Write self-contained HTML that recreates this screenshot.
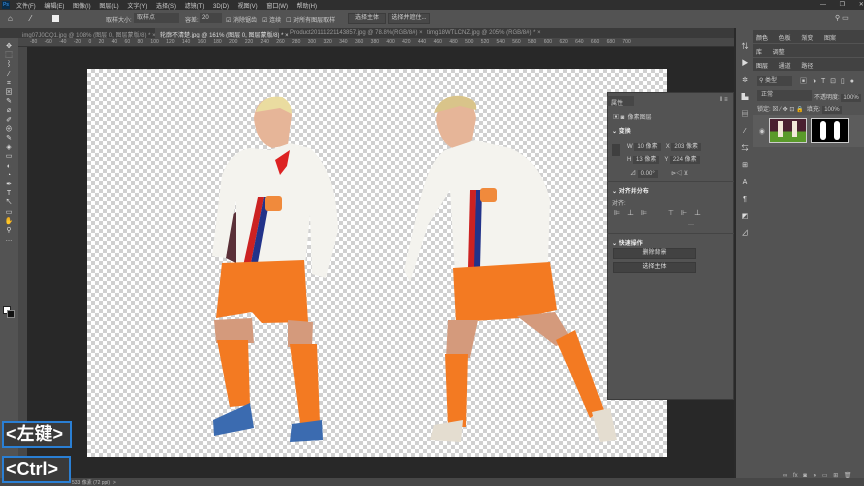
<!DOCTYPE html>
<html><head><meta charset="utf-8"><style>
*{margin:0;padding:0;box-sizing:border-box}
body{width:864px;height:486px;overflow:hidden;background:#282828;font-family:"Liberation Sans","Noto Sans CJK SC",sans-serif;font-size:6px;color:#ccc;position:relative}
.a{position:absolute}
.chk{background-color:#fff;background-image:conic-gradient(#d0d0d0 25%,#fff 0 50%,#d0d0d0 0 75%,#fff 0);background-size:8px 8px}
.key{position:absolute;left:2px;border:2px solid #2a7fd4;background:#3a3a3a;color:#fff;font-size:18px;font-weight:bold;padding:0 2px;line-height:22px}
.btn{position:absolute;background:#424242;border:1px solid #3a3a3a;color:#ddd;text-align:center;line-height:9px}
</style></head><body>
<div class="a" style="left:0;top:0;width:864px;height:10px;background:#2f2f2f"></div>
<div class="a" style="left:2px;top:1px;width:8px;height:8px;background:#0a2d4a;color:#3fa0ff;font-size:5px;line-height:8px;text-align:center">Ps</div>
<div class="a" style="left:16px;top:1px;color:#ccc;word-spacing:7px">文件(F) 编辑(E) 图像(I) 图层(L) 文字(Y) 选择(S) 滤镜(T) 3D(D) 视图(V) 窗口(W) 帮助(H)</div>
<div class="a" style="left:820px;top:1px;color:#ccc;word-spacing:12px">— ❐ ✕</div>
<div class="a" style="left:0;top:10px;width:864px;height:18px;background:#535353"></div>
<div class="a" style="left:8px;top:14px;color:#ddd;font-size:8px">⌂</div>
<div class="a" style="left:30px;top:14px;color:#ddd;font-size:8px">⁄</div>
<div class="a" style="left:52px;top:15px;width:7px;height:7px;background:#eee"></div>
<div class="a" style="left:106px;top:15px;">取样大小:</div>
<div class="a" style="left:134px;top:13px;width:45px;height:10px;background:#454545;padding-left:3px;line-height:10px">取样点</div>
<div class="a" style="left:185px;top:15px;">容差:</div>
<div class="a" style="left:200px;top:13px;width:22px;height:10px;background:#454545;padding-left:2px;line-height:10px">20</div>
<div class="a" style="left:226px;top:15px;">☑ 消除锯齿 &nbsp; ☑ 连续 &nbsp; ☐ 对所有图层取样</div>
<div class="a" style="left:348px;top:13px;width:38px;height:11px;background:#484848;border:1px solid #3c3c3c;text-align:center;line-height:9px">选择主体</div>
<div class="a" style="left:388px;top:13px;width:42px;height:11px;background:#484848;border:1px solid #3c3c3c;text-align:center;line-height:9px">选择并遮住...</div>
<div class="a" style="left:835px;top:14px;font-size:7px">⚲ ▭</div>
<div class="a" style="left:0;top:28px;width:736px;height:10px;background:#3a3a3a"></div>
<div class="a" style="left:22px;top:30px;color:#999">img07J0CQ1.jpg @ 108% (图层 0, 图层蒙版/8) * ×</div>
<div class="a" style="left:155px;top:28px;width:124px;height:10px;background:#4a4a4a"></div>
<div class="a" style="left:160px;top:30px;color:#ddd">轮廓不清楚.jpg @ 161% (图层 0, 图层蒙版/8) * ×</div>
<div class="a" style="left:290px;top:30px;color:#999">Product20111221143857.jpg @ 78.8%(RGB/8#) ×</div>
<div class="a" style="left:427px;top:30px;color:#999">timg18WTLCNZ.jpg @ 205% (RGB/8#) * ×</div>
<div class="a" style="left:18px;top:38px;width:718px;height:9px;background:#484848;border-bottom:1px solid #333"></div>
<div class="a" style="left:30px;top:39px;color:#aaa;font-size:5px;word-spacing:6px">-80 -60 -40 -20 0 20 40 60 80 100 120 140 160 180 200 220 240 260 280 300 320 340 360 380 400 420 440 460 480 500 520 540 560 580 600 620 640 660 680 700</div>
<div class="a" style="left:18px;top:47px;width:9px;height:431px;background:#484848"></div>
<div class="a" style="left:0;top:38px;width:18px;height:440px;background:#535353"></div>
<div class="a" style="left:4px;top:42px;color:#ddd;font-size:7px;line-height:9.2px;width:10px;text-align:center">✥<br>⬚<br>⌇<br>⁄<br>⌗<br>⊠<br>✎<br>⌀<br>✐<br>⊕<br>✎<br>◈<br>▭<br>◐<br>◔<br>✒<br>T<br>↖<br>▭<br>✋<br>⚲<br>…</div>
<div class="a" style="left:3px;top:306px;width:8px;height:8px;background:#fff;border:1px solid #222"></div>
<div class="a" style="left:7px;top:310px;width:8px;height:8px;background:#111;border:1px solid #888"></div>
<div class="a chk" style="left:87px;top:69px;width:580px;height:388px"></div>
<svg class="a" style="left:0;top:0" width="864" height="486">
 <!-- player1 -->
 <path d="M232 215 L245 205 L240 265 L226 258Z" fill="#5a3038"/>
 <path d="M272 97 Q256 100 254 118 Q256 142 272 148 L288 145 L292 115 Q290 98 272 97Z" fill="#e6b598"/>
 <path d="M256 112 Q262 94 282 97 Q292 102 292 114 L280 108 Z" fill="#eadca0"/>
 <path d="M250 148 Q232 150 222 175 L212 256 L226 258 L236 200 L236 268 L305 265 L310 215 L312 274 L326 278 L338 230 Q336 170 310 148 L290 143 L270 150Z" fill="#f4f3ee"/>
 <path d="M275 160 L290 150 L287 166 L280 175 Z" fill="#d22"/>
 <path d="M258 197 L264 197 L250 268 L243 266Z" fill="#c22"/>
 <path d="M264 197 L270 197 L257 268 L250 268Z" fill="#22338a"/>
 <rect x="265" y="196" width="17" height="15" rx="3" fill="#f08a3c"/>
 <path d="M222 263 L304 260 L308 322 L262 323 L252 312 L216 318Z" fill="#f37a22"/>
 <path d="M214 320 L252 318 L254 343 L216 343Z" fill="#d49a7c"/>
 <path d="M217 340 L248 340 L250 405 L230 407Z" fill="#f37a22"/>
 <path d="M288 320 L313 322 L312 347 L288 347Z" fill="#d49a7c"/>
 <path d="M290 344 L317 344 L320 423 L300 423Z" fill="#f37a22"/>
 <path d="M213 420 L250 403 L254 428 L214 436Z" fill="#3b6bb0"/>
 <path d="M292 424 L322 420 L323 440 L290 442Z" fill="#3b6bb0"/>
 <!-- player2 -->
 <path d="M455 98 Q438 100 436 120 Q440 146 458 150 L472 140 L476 118 Q474 100 455 98Z" fill="#e6b598"/>
 <path d="M434 113 Q440 94 462 96 Q478 99 476 110 L460 106Z" fill="#d9c48a"/>
 <path d="M445 150 Q430 160 420 200 L404 270 L410 282 L428 225 L450 190 L455 273 L533 268 L530 225 L532 265 L548 262 L550 200 Q540 160 510 148 L475 140Z" fill="#f4f3ee"/>
 <path d="M470 190 L476 190 L475 268 L468 268Z" fill="#c22"/>
 <path d="M476 190 L482 190 L480 268 L474 268Z" fill="#22338a"/>
 <rect x="480" y="188" width="17" height="14" rx="3" fill="#f08a3c"/>
 <path d="M453 268 L550 262 L557 310 L520 318 L456 322Z" fill="#f37a22"/>
 <path d="M448 320 L478 320 L470 358 L446 358Z" fill="#d49a7c"/>
 <path d="M445 354 L468 354 L466 427 L448 427Z" fill="#f37a22"/>
 <path d="M517 316 L555 312 L572 340 L556 346Z" fill="#d49a7c"/>
 <path d="M556 340 L575 330 L604 410 L590 418Z" fill="#f37a22"/>
 <path d="M434 425 L463 420 L461 442 L430 440Z" fill="#e4ddd0"/>
 <path d="M592 412 L610 408 L617 440 L600 442Z" fill="#e4ddd0"/>
</svg>
<div class="a" style="left:607px;top:92px;width:127px;height:308px;background:#535353;border:1px solid #3a3a3a"></div>
<div class="a" style="left:607px;top:96px;width:27px;height:10px;background:#464646;padding:2px 4px">属性</div>
<div class="a" style="left:720px;top:97px">‖ ≡</div>
<div class="a" style="left:613px;top:112px">▣ ◙ &nbsp;像素图层</div>
<div class="a" style="left:612px;top:126px;color:#eee;font-weight:bold">⌄ 变换</div>
<div class="a" style="left:612px;top:144px;width:8px;height:12px;background:#3f3f3f"></div>
<div class="a" style="left:627px;top:141px">W <span style="background:#454545;padding:1px 3px">10 像素</span> &nbsp;&nbsp;X <span style="background:#454545;padding:1px 3px">203 像素</span></div>
<div class="a" style="left:627px;top:154px">H <span style="background:#454545;padding:1px 3px">13 像素</span> &nbsp;&nbsp;Y <span style="background:#454545;padding:1px 3px">224 像素</span></div>
<div class="a" style="left:630px;top:168px">⊿ <span style="background:#454545;padding:1px 3px">0.00°</span> &nbsp;&nbsp;&nbsp;&nbsp;&nbsp;&nbsp;&nbsp;⊳◁ ⊻</div>
<div class="a" style="left:607px;top:181px;width:127px;height:1px;background:#444"></div>
<div class="a" style="left:612px;top:186px;color:#eee;font-weight:bold">⌄ 对齐并分布</div>
<div class="a" style="left:612px;top:198px">对齐:</div>
<div class="a" style="left:614px;top:208px;font-size:7px;word-spacing:5px">⊫ ⊥ ⊫ &nbsp; ⊤ ⊩ ⊥</div>
<div class="a" style="left:688px;top:222px">···</div>
<div class="a" style="left:607px;top:233px;width:127px;height:1px;background:#444"></div>
<div class="a" style="left:612px;top:238px;color:#eee;font-weight:bold">⌄ 快速操作</div>
<div class="btn" style="left:613px;top:248px;width:83px;height:11px">删除背景</div>
<div class="btn" style="left:613px;top:262px;width:83px;height:11px">选择主体</div>
<div class="a" style="left:734px;top:28px;width:2px;height:450px;background:#2a2a2a"></div>
<div class="a" style="left:736px;top:28px;width:17px;height:450px;background:#535353"></div>
<div class="a" style="left:740px;top:38px;color:#ddd;font-size:7px;line-height:17px;width:10px;text-align:center">⇅<br>▶<br>✲<br>▙<br>▤<br>⁄<br>⇆<br>⊞<br>A<br>¶<br>◩<br>⊿</div>
<div class="a" style="left:753px;top:28px;width:111px;height:450px;background:#535353"></div>
<div class="a" style="left:753px;top:30px;width:111px;height:13px;background:#424242"></div>
<div class="a" style="left:756px;top:33px;word-spacing:9px"><span style="color:#ddd">颜色</span> 色板 渐变 图案</div>
<div class="a" style="left:753px;top:44px;width:111px;height:13px;background:#424242"></div>
<div class="a" style="left:756px;top:47px;word-spacing:9px"><span style="color:#ddd">库</span> 调整</div>
<div class="a" style="left:753px;top:58px;width:111px;height:13px;background:#424242"></div>
<div class="a" style="left:756px;top:61px;word-spacing:9px"><span style="color:#ddd">图层</span> 通道 路径</div>
<div class="a" style="left:757px;top:76px;width:35px;height:10px;background:#454545;padding-left:2px;line-height:10px">⚲ 类型</div>
<div class="a" style="left:800px;top:76px;font-size:7px;word-spacing:3px">▣ ◑ T ⊡ ▯ ●</div>
<div class="a" style="left:757px;top:90px;width:55px;height:11px;background:#454545;padding-left:4px;line-height:11px">正常</div>
<div class="a" style="left:814px;top:92px">不透明度: <span style="background:#454545;padding:1px 2px">100%</span></div>
<div class="a" style="left:757px;top:104px">锁定: ⊠ ⁄ ✥ ⊡ 🔒 &nbsp;填充: <span style="background:#454545;padding:1px 2px">100%</span></div>
<div class="a" style="left:753px;top:115px;width:111px;height:32px;background:#5c5c5c"></div>
<div class="a" style="left:759px;top:127px">◉</div>
<div class="a" style="left:769px;top:118px;width:38px;height:25px;background:linear-gradient(#4a2030 0 55%,#5a9a2a 55%);border:1px solid #ccc"></div>
<div class="a" style="left:778px;top:121px;width:5px;height:16px;background:#f2e8d8"></div>
<div class="a" style="left:792px;top:121px;width:5px;height:16px;background:#f2e8d8"></div>
<div class="a" style="left:811px;top:118px;width:38px;height:25px;background:#000;border:1px solid #ccc"></div>
<div class="a" style="left:820px;top:121px;width:6px;height:19px;background:#fff;border-radius:3px"></div>
<div class="a" style="left:834px;top:121px;width:6px;height:19px;background:#fff;border-radius:3px"></div>
<div class="a" style="left:753px;top:472px;width:111px;height:6px;color:#bbb;font-size:6px;padding-left:30px;word-spacing:4px">∞ fx ◙ ◑ ▭ ⊞ 🗑</div>
<div class="a" style="left:0;top:478px;width:864px;height:8px;background:#474747"></div>
<div class="a" style="left:72px;top:479px;color:#bbb;font-size:5px">533 像素 (72 ppi) &nbsp;&gt;</div>
<div class="key" style="top:421px;width:70px;height:27px">&lt;左键&gt;</div>
<div class="key" style="top:456px;width:69px;height:27px">&lt;Ctrl&gt;</div>
</body></html>
